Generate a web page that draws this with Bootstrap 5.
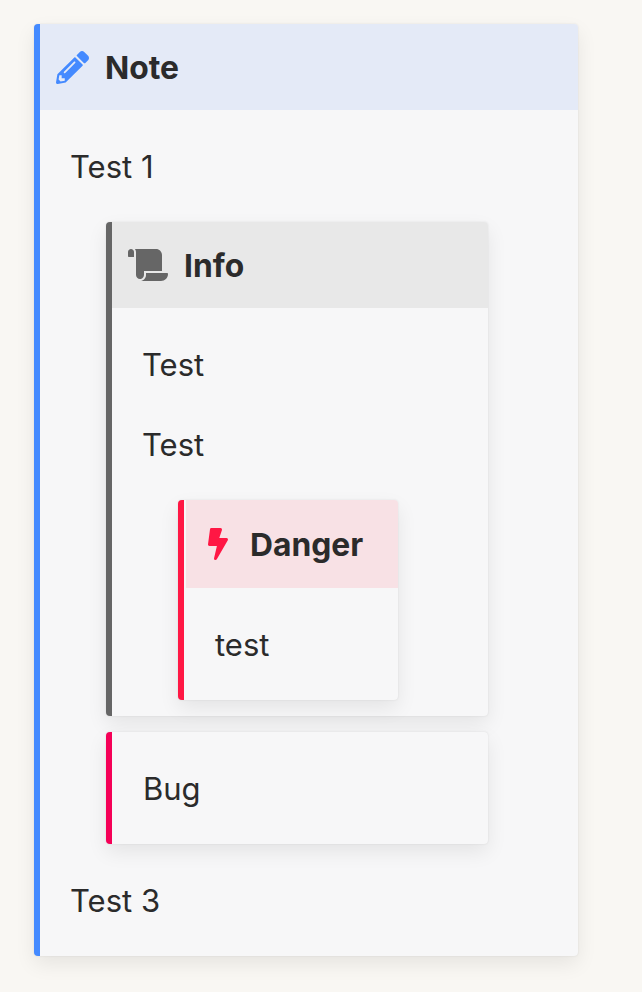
<!DOCTYPE html>
<html lang="en">
<head>
  <meta charset="UTF-8" />
  <meta name="viewport" content="width=device-width, initial-scale=1.0"/>
  <title>Admonitions</title>
  <link href="https://cdn.jsdelivr.net/npm/bootstrap@5.3.3/dist/css/bootstrap.min.css" rel="stylesheet">
  <style>
    body { background: #f9f7f3; color: #2b2b2b; font-family: Inter, "Liberation Sans", sans-serif; font-size: 31px; line-height: 48px; }
    .page-wrap { padding: 24px 64px 36px 34px; }
    .adm { background: #f7f7f8; border-left: 6px solid #448aff; border-radius: 4px; box-shadow: 0 8px 20px rgba(0,0,0,.08), 0 0 2px rgba(0,0,0,.1); }
    .adm-title { height: 86px; padding-left: 17px; gap: 18px; font-size: 31.8px; font-weight: 700; border-top-right-radius: 4px; }
    .adm-title svg { display: block; flex: none; }
    .adm-title span { padding-top: 2px; }
    .adm-body { padding: 33px 31px 31px 31px; }
    .adm-body p { margin: 0 0 32px; }
    .adm-body p:last-child { margin-bottom: 0; }
    .adm-body > p { margin-left: -1px; }
    .adm-nest { margin: 0 59px 16px 35px; }
    .adm-note .adm-title { background: #e4eaf7; padding-left: 16px; gap: 16px; }
    .adm-note > .adm-body > p:first-child { margin-bottom: 31px; }
    .adm-info { border-left-color: #666; }
    .adm-info .adm-title { background: #e8e8e8; }
    .adm-danger { border-left-color: #ff1744; margin-top: -1px; }
    .adm-danger .adm-title { background: #f8e1e5; height: 88px; margin-left: 2px; padding-left: 21px; gap: 21px; }
    .adm-danger .adm-title span { padding-top: 1px; }
    .adm-bug { border-left-color: #f50057; margin-bottom: 33px; }
    .adm-bug .adm-body { padding: 33px 31px 31px; }
    .adm-info > .adm-body { padding-bottom: 16px; }
    .adm-danger .adm-body { padding: 33px 31px 31px; }
    .adm-danger .adm-body > p, .adm-bug .adm-body > p { margin-left: 0; }
    .adm-danger.adm-nest { margin-bottom: 0; }
    .ic-note { fill: #448aff; }
    .ic-info { fill: #666; }
    .ic-danger { fill: #ff1744; }
  </style>
</head>
<body>
  <div class="page-wrap">
    <div class="adm adm-note">
      <div class="adm-title d-flex align-items-center">
        <svg class="ic-note" width="33" height="33" viewBox="0 0 512 512"><path d="M497.9 142.1l-46.1 46.1c-4.7 4.7-12.3 4.7-17 0l-111-111c-4.7-4.7-4.7-12.3 0-17l46.1-46.1c18.7-18.7 49.1-18.7 67.9 0l60.1 60.1c18.8 18.7 18.8 49.1 0 67.9zM284.2 99.8L21.6 362.4.4 483.9c-2.9 16.4 11.4 30.6 27.8 27.8l121.5-21.3 262.6-262.6c4.7-4.7 4.7-12.3 0-17l-111-111c-4.8-4.7-12.4-4.7-17.1 0zM124.1 339.9c-5.5-5.5-5.5-14.3 0-19.8l154-154c5.5-5.5 14.3-5.5 19.8 0s5.5 14.3 0 19.8l-154 154c-5.5 5.5-14.3 5.5-19.8 0zM88 424h48v36.3l-64.5 11.3-31.1-31.1L51.7 376H88v48z"/></svg>
        <span>Note</span>
      </div>
      <div class="adm-body">
        <p>Test 1</p>
        <div class="adm adm-info adm-nest">
          <div class="adm-title d-flex align-items-center">
            <svg class="ic-info" width="40" height="32" viewBox="0 0 640 512"><path d="M48 0C21.53 0 0 21.53 0 48v64c0 8.84 7.16 16 16 16h80V48C96 21.53 74.47 0 48 0zm208 412.57V352h288V96c0-52.94-43.06-96-96-96H111.59C121.74 13.41 128 29.92 128 48v368c0 38.87 34.66 69.65 74.75 63.12C234.22 474 256 444.46 256 412.57zM288 384v32c0 52.93-43.06 96-96 96h336c61.86 0 112-50.14 112-112 0-8.84-7.16-16-16-16H288z"/></svg>
            <span>Info</span>
          </div>
          <div class="adm-body">
            <p>Test</p>
            <p>Test</p>
            <div class="adm adm-danger adm-nest">
              <div class="adm-title d-flex align-items-center">
                <svg class="ic-danger" width="22" height="32" viewBox="0 0 320 512"><path d="M296 160H180.6l42.6-129.8C227.2 15 215.7 0 200 0H56C44 0 33.8 8.9 32.2 20.8l-32 240C-1.7 275.2 9.5 288 24 288h118.7L96.6 482.5c-3.6 15.2 8 29.5 23.3 29.5 8.4 0 16.4-4.4 20.8-12l176-304c9.3-15.9-2.2-36-20.7-36z"/></svg>
                <span>Danger</span>
              </div>
              <div class="adm-body">
                <p>test</p>
              </div>
            </div>
          </div>
        </div>
        <div class="adm adm-bug adm-nest">
          <div class="adm-body">
            <p>Bug</p>
          </div>
        </div>
        <p>Test 3</p>
      </div>
    </div>
  </div>
  <script src="https://cdn.jsdelivr.net/npm/bootstrap@5.3.3/dist/js/bootstrap.bundle.min.js"></script>
</body>
</html>
